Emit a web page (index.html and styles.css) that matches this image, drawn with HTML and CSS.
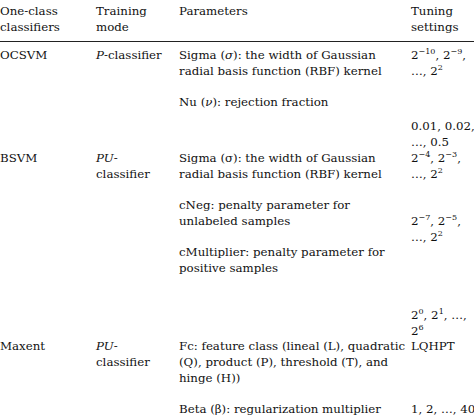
FILE: index.html
```html
<!DOCTYPE html>
<html lang="en">
<head>
<meta charset="utf-8">
<title>One-class classifiers tuning</title>
<link rel="stylesheet" href="styles.css">
</head>
<body>
<div class="table">
  <div class="row head">
    <div class="cell">One-class<br>classifiers</div>
    <div class="cell">Training<br>mode</div>
    <div class="cell">Parameters</div>
    <div class="cell">Tuning<br>settings</div>
  </div>
  <div class="row first">
    <div class="cell">OCSVM</div>
    <div class="cell"><i>P</i>-classifier</div>
    <div class="cell">
      <p>Sigma (<i>σ</i>): the width of Gaussian<br>radial basis function (RBF) kernel</p>
      <p class="g15">Nu (<i>ν</i>): rejection fraction</p>
    </div>
    <div class="cell">
      <p>2<sup>−10</sup>, 2<sup>−9</sup>,<br>…, 2<sup>2</sup></p>
      <p class="g39">0.01, 0.02,<br>…, 0.5</p>
    </div>
  </div>
  <div class="row">
    <div class="cell">BSVM</div>
    <div class="cell"><i>PU</i>-<br>classifier</div>
    <div class="cell">
      <p>Sigma (σ): the width of Gaussian<br>radial basis function (RBF) kernel</p>
      <p class="g15">cNeg: penalty parameter for<br>unlabeled samples</p>
      <p class="g15">cMultiplier: penalty parameter for<br>positive samples</p>
    </div>
    <div class="cell">
      <p>2<sup>−4</sup>, 2<sup>−3</sup>,<br>…, 2<sup>2</sup></p>
      <p class="g31">2<sup>−7</sup>, 2<sup>−5</sup>,<br>…, 2<sup>2</sup></p>
      <p class="g62 tuck1">2<sup>0</sup>, 2<sup>1</sup>, …,<br>2<sup>6</sup></p>
    </div>
  </div>
  <div class="row">
    <div class="cell">Maxent</div>
    <div class="cell"><i>PU</i>-<br>classifier</div>
    <div class="cell">
      <p>Fc: feature class (lineal (L), quadratic<br>(Q), product (P), threshold (T), and<br>hinge (H))</p>
      <p class="g15">Beta (β): regularization multiplier</p>
    </div>
    <div class="cell">
      <p>LQHPT</p>
      <p class="g47">1, 2, …, 40</p>
    </div>
  </div>
</div>
</body>
</html>
```

FILE: styles.css
```css
html, body {
  margin: 0;
  padding: 0;
  background: #ffffff;
  overflow: hidden;
}

body {
  font-family: "DejaVu Serif", "Liberation Serif", serif;
  font-size: 11.8px;
  line-height: 16px;
  color: #111111;
}

.table {
  width: 474px;
}

.row {
  display: grid;
  grid-template-columns: 96px 83px 232px 1fr;
  white-space: nowrap;
}

.head {
  padding: 3px 0 6px;
  border-bottom: 1px solid #222222;
}

.first {
  padding-top: 5px;
}

.cell p {
  margin: 0;
}

.cell .g15 { margin-top: 15px; }
.cell .g31 { margin-top: 31px; }
.cell .g39 { margin-top: 39px; }
.cell .g47 { margin-top: 47px; }
.cell .g62 { margin-top: 62px; }
.cell .tuck1 { margin-bottom: -1px; }

sup {
  font-size: 8px;
  line-height: 0;
  vertical-align: 5px;
}
```
